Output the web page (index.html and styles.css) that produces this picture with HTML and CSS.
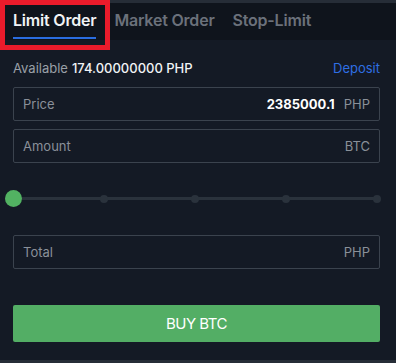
FILE: index.html
```html
<!DOCTYPE html>
<html>
<head>
<meta charset="utf-8">
<link rel="stylesheet" href="styles.css">
</head>
<body>
<div class="panel">
  <div class="topline"></div>
  <div class="tabs">
    <div class="tab active">Limit Order</div>
    <div class="tab">Market Order</div>
    <div class="tab">Stop-Limit</div>
    <div class="highlight"></div>
  </div>
  <div class="form">
    <div class="avail">
      <span class="lbl">Available</span>
      <span class="val">174.00000000 PHP</span>
      <span class="deposit">Deposit</span>
    </div>
    <div class="field f-price">
      <span class="fl">Price</span>
      <span class="fv">2385000.1</span>
      <span class="fu">PHP</span>
    </div>
    <div class="field f-amount">
      <span class="fl">Amount</span>
      <span class="fu">BTC</span>
    </div>
    <div class="slider">
      <div class="track"></div>
      <div class="dots">
        <span class="stop"><span class="knob"></span></span>
        <span class="stop"><span class="dot"></span></span>
        <span class="stop"><span class="dot"></span></span>
        <span class="stop"><span class="dot"></span></span>
        <span class="stop"><span class="dot"></span></span>
      </div>
    </div>
    <div class="field f-total">
      <span class="fl">Total</span>
      <span class="fu">PHP</span>
    </div>
    <button class="buy">BUY BTC</button>
  </div>
  <div class="bottomline"></div>
</div>
</body>
</html>
```
FILE: styles.css
```css
* { box-sizing: border-box; }
html, body { margin: 0; padding: 0; }
body {
  width: 396px;
  height: 363px;
  background: #141a25;
  font-family: Inter, "Noto Sans", sans-serif;
  overflow: hidden;
}
.panel {
  position: relative;
  height: 363px;
  display: flex;
  flex-direction: column;
}
.topline {
  height: 3px;
  background: #262d37;
}
.tabs {
  position: relative;
  height: 37px;
  background: #0f141c;
  display: flex;
  align-items: flex-start;
  padding-left: 13px;
  gap: 18px;
}
.tab {
  font-size: 16px;
  font-weight: 600;
  color: #6b717b;
  padding-top: 7px;
  height: 37px;
  letter-spacing: -0.2px;
}
.tab.active {
  color: #f1f3f5;
  position: relative;
}
.tab.active::after {
  content: "";
  position: absolute;
  left: 0;
  right: 0;
  top: 34px;
  height: 2px;
  background: #2a6de0;
}
.highlight {
  position: absolute;
  left: 0;
  top: -3px;
  width: 110px;
  height: 50px;
  border: 5px solid #ea1b2b;
}
.form {
  padding: 0 16px 0 13px;
  display: flex;
  flex-direction: column;
}
.avail {
  display: flex;
  align-items: center;
  height: 17px;
  margin-top: 19px;
  font-size: 13px;
}
.avail .lbl { color: #9aa0a8; margin-right: 4px; }
.avail .val { color: #f1f3f5; font-weight: 500; }
.avail .deposit { margin-left: auto; color: #2f6fe3; }
.field {
  height: 34px;
  border: 1px solid #3b434e;
  border-radius: 2px;
  display: flex;
  align-items: center;
  padding: 0 9px 0 9px;
  font-size: 13px;
  color: #8a9099;
}
.f-price { margin-top: 11px; }
.f-amount { margin-top: 8px; }
.fl { flex: 1; }
.fv { color: #ffffff; font-weight: 700; margin-right: 9px; }
.fu { color: #8a9099; }
.slider {
  position: relative;
  height: 72px;
  margin-left: -13px;
  margin-right: -16px;
}
.track {
  position: absolute;
  left: 13px;
  right: 19px;
  top: 34px;
  height: 3px;
  background: #2a323c;
}
.dots {
  position: absolute;
  left: 4.5px;
  right: 10.5px;
  top: 27px;
  height: 17px;
  display: flex;
  justify-content: space-between;
  align-items: center;
}
.stop {
  width: 17px;
  height: 17px;
  display: flex;
  align-items: center;
  justify-content: center;
}
.knob {
  width: 17px;
  height: 17px;
  border-radius: 50%;
  background: #52b262;
}
.dot {
  width: 8px;
  height: 8px;
  border-radius: 50%;
  background: #2a323c;
}
.buy {
  margin-top: 36px;
  height: 37px;
  border: none;
  border-radius: 2px;
  background: #53ae65;
  color: #ffffff;
  font-family: Inter, "Noto Sans", sans-serif;
  font-size: 15px;
  font-weight: 400;
  letter-spacing: -0.5px;
}
.bottomline {
  position: absolute;
  left: 0;
  right: 0;
  bottom: 0;
  height: 3px;
  background: #262d37;
}
```
